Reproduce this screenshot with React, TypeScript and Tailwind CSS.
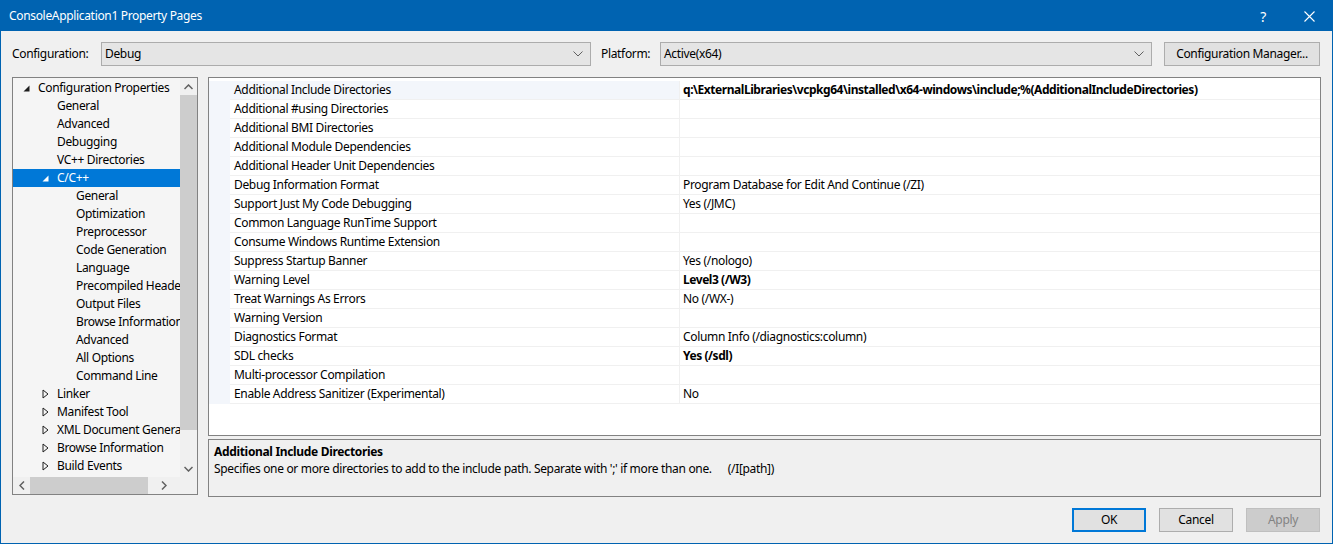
import React from "react";

const F = { fontFamily: '"Segoe UI", "Noto Sans", "Liberation Sans", sans-serif' };

function Chevron({ className = "" }: { className?: string }) {
  return (
    <svg width="10" height="6" viewBox="0 0 10 6" className={className}>
      <path d="M0.5 0.5 L5 5 L9.5 0.5" fill="none" stroke="#606060" strokeWidth="1" />
    </svg>
  );
}

function Combo({ value, w }: { value: string; w: string }) {
  return (
    <div className={`${w} h-[24px] bg-[#e5e5e5] border border-[#acacac] flex items-center justify-between pl-[3px] pr-[7px]`}>
      <span>{value}</span>
      <Chevron />
    </div>
  );
}

function Expanded({ white }: { white?: boolean }) {
  return (
    <svg width="7" height="7" viewBox="0 0 7 7">
      <polygon points="6.5,0.5 6.5,6.5 0.5,6.5" fill={white ? "#ffffff" : "#1e1e1e"} />
    </svg>
  );
}

function Collapsed() {
  return (
    <svg width="7" height="10" viewBox="0 0 7 10">
      <polygon points="1,1 6,5 1,9" fill="none" stroke="#1e1e1e" strokeWidth="1" />
    </svg>
  );
}

type TreeItem = { label: string; level: number; state?: "exp" | "col"; selected?: boolean };

const tree: TreeItem[] = [
  { label: "Configuration Properties", level: 0, state: "exp" },
  { label: "General", level: 1 },
  { label: "Advanced", level: 1 },
  { label: "Debugging", level: 1 },
  { label: "VC++ Directories", level: 1 },
  { label: "C/C++", level: 1, state: "exp", selected: true },
  { label: "General", level: 2 },
  { label: "Optimization", level: 2 },
  { label: "Preprocessor", level: 2 },
  { label: "Code Generation", level: 2 },
  { label: "Language", level: 2 },
  { label: "Precompiled Headers", level: 2 },
  { label: "Output Files", level: 2 },
  { label: "Browse Information", level: 2 },
  { label: "Advanced", level: 2 },
  { label: "All Options", level: 2 },
  { label: "Command Line", level: 2 },
  { label: "Linker", level: 1, state: "col" },
  { label: "Manifest Tool", level: 1, state: "col" },
  { label: "XML Document Generator", level: 1, state: "col" },
  { label: "Browse Information", level: 1, state: "col" },
  { label: "Build Events", level: 1, state: "col" },
];

const indent = ["pl-[25px]", "pl-[44px]", "pl-[63px]"];

const rows: { name: string; value?: string; bold?: boolean }[] = [
  { name: "Additional Include Directories", value: "q:\\ExternalLibraries\\vcpkg64\\installed\\x64-windows\\include;%(AdditionalIncludeDirectories)", bold: true },
  { name: "Additional #using Directories" },
  { name: "Additional BMI Directories" },
  { name: "Additional Module Dependencies" },
  { name: "Additional Header Unit Dependencies" },
  { name: "Debug Information Format", value: "Program Database for Edit And Continue (/ZI)" },
  { name: "Support Just My Code Debugging", value: "Yes (/JMC)" },
  { name: "Common Language RunTime Support" },
  { name: "Consume Windows Runtime Extension" },
  { name: "Suppress Startup Banner", value: "Yes (/nologo)" },
  { name: "Warning Level", value: "Level3 (/W3)", bold: true },
  { name: "Treat Warnings As Errors", value: "No (/WX-)" },
  { name: "Warning Version" },
  { name: "Diagnostics Format", value: "Column Info (/diagnostics:column)" },
  { name: "SDL checks", value: "Yes (/sdl)", bold: true },
  { name: "Multi-processor Compilation" },
  { name: "Enable Address Sanitizer (Experimental)", value: "No" },
];

export default function App() {
  return (
    <div style={F} className="w-[1333px] h-[544px] bg-[#f0f0f0] border-x border-b border-[#0063b1] flex flex-col text-[12px] tracking-[-0.33px] text-black overflow-hidden">
      {/* title bar */}
      <div className="h-[31px] bg-[#0063b1] text-white flex items-center shrink-0 pt-[1px]">
        <span className="pl-[8px] text-[12px] flex-1">ConsoleApplication1 Property Pages</span>
        <span className="w-[46px] text-center text-[14px]">?</span>
        <span className="w-[46px] text-center">
          <svg width="11" height="11" viewBox="0 0 11 11" className="inline-block">
            <path d="M0.5 0.5 L10.5 10.5 M10.5 0.5 L0.5 10.5" stroke="#fff" strokeWidth="1.1" />
          </svg>
        </span>
      </div>

      <div className="flex flex-col px-[11px] pt-[11px] flex-1">
        {/* config row */}
        <div className="flex items-center h-[24px]">
          <span className="w-[89px]">Configuration:</span>
          <Combo value="Debug" w="w-[490px]" />
          <span className="ml-[10px] w-[59px]">Platform:</span>
          <Combo value="Active(x64)" w="w-[492px]" />
          <div className="ml-[12px] w-[156px] h-[24px] bg-[#e1e1e1] border border-[#adadad] flex items-center justify-center">
            Configuration Manager...
          </div>
        </div>

        {/* main */}
        <div className="flex mt-[11px] h-[420px]">
          {/* tree */}
          <div className="w-[186px] h-[418px] border border-[#828282] bg-[#f0f0f0] flex flex-col">
            <div className="flex h-[399px]">
              <div className="w-[167px] bg-[#f5f5f5] overflow-hidden pt-[1px]">
                {tree.map((t, i) => (
                  <div
                    key={i}
                    className={`h-[18px] flex items-center whitespace-nowrap relative ${indent[t.level]} ${t.selected ? "bg-[#0078d7] text-white" : ""}`}
                  >
                    <span className="absolute flex items-center" style={{ left: t.level === 0 ? 10 : 29 }}>
                      {t.state === "exp" && <Expanded white={t.selected} />}
                      {t.state === "col" && <Collapsed />}
                    </span>
                    {t.label}
                  </div>
                ))}
              </div>
              <div className="w-[17px] flex flex-col items-center">
                <div className="h-[17px] flex items-center justify-center">
                  <svg width="9" height="6" viewBox="0 0 9 6">
                    <path d="M0.5 5 L4.5 1 L8.5 5" fill="none" stroke="#606060" strokeWidth="1.5" />
                  </svg>
                </div>
                <div className="w-[17px] h-[335px] bg-[#cdcdcd]" />
                <div className="flex-1" />
                <div className="h-[17px] flex items-center justify-center">
                  <svg width="9" height="6" viewBox="0 0 9 6">
                    <path d="M0.5 1 L4.5 5 L8.5 1" fill="none" stroke="#606060" strokeWidth="1.5" />
                  </svg>
                </div>
              </div>
            </div>
            <div className="flex h-[17px]">
              <div className="w-[167px] flex items-center">
                <div className="w-[17px] flex justify-center">
                  <svg width="6" height="9" viewBox="0 0 6 9">
                    <path d="M5 0.5 L1 4.5 L5 8.5" fill="none" stroke="#606060" strokeWidth="1.5" />
                  </svg>
                </div>
                <div className="w-[118px] h-[17px] bg-[#cdcdcd]" />
                <div className="flex-1 flex justify-center">
                  <svg width="6" height="9" viewBox="0 0 6 9">
                    <path d="M1 0.5 L5 4.5 L1 8.5" fill="none" stroke="#606060" strokeWidth="1.5" />
                  </svg>
                </div>
              </div>
            </div>
          </div>

          {/* right */}
          <div className="ml-[10px] w-[1114px] flex flex-col">
            <div className="h-[360px] border border-[#828282] bg-white pt-[3px]">
              {rows.map((r, i) => (
                <div key={i} className="flex h-[19px]">
                  <div className="w-[21px] bg-[#f3f6fb]" />
                  <div className={`w-[449px] flex items-center pl-[4px] border-b border-[#f0f0f0] ${i === 0 ? "bg-[#f3f6fb]" : ""}`}>
                    {r.name}
                  </div>
                  <div className={`flex-1 flex items-center pl-[3px] border-l border-b border-[#f0f0f0] whitespace-nowrap ${r.bold ? "font-bold tracking-[-0.45px]" : ""}`}>
                    {r.value ?? ""}
                  </div>
                </div>
              ))}
            </div>
            <div className="mt-[3px] h-[58px] border border-[#828282] bg-[#f0f0f0] px-[5px] pt-[3px] leading-[17px]">
              <div className="font-bold">Additional Include Directories</div>
              <div>
                Specifies one or more directories to add to the include path. Separate with ';' if more than one.
                <span className="ml-[16px]">(/I[path])</span>
              </div>
            </div>
          </div>
        </div>

        {/* buttons */}
        <div className="flex justify-end gap-[13px] mt-[11px] pr-[1px]">
          <div className="w-[74px] h-[24px] border-2 border-[#0078d7] bg-[#e1e1e1] flex items-center justify-center">OK</div>
          <div className="w-[74px] h-[24px] border border-[#adadad] bg-[#e1e1e1] flex items-center justify-center">Cancel</div>
          <div className="w-[74px] h-[24px] border border-[#bfbfbf] bg-[#cccccc] text-[#838383] flex items-center justify-center">Apply</div>
        </div>
      </div>
    </div>
  );
}
